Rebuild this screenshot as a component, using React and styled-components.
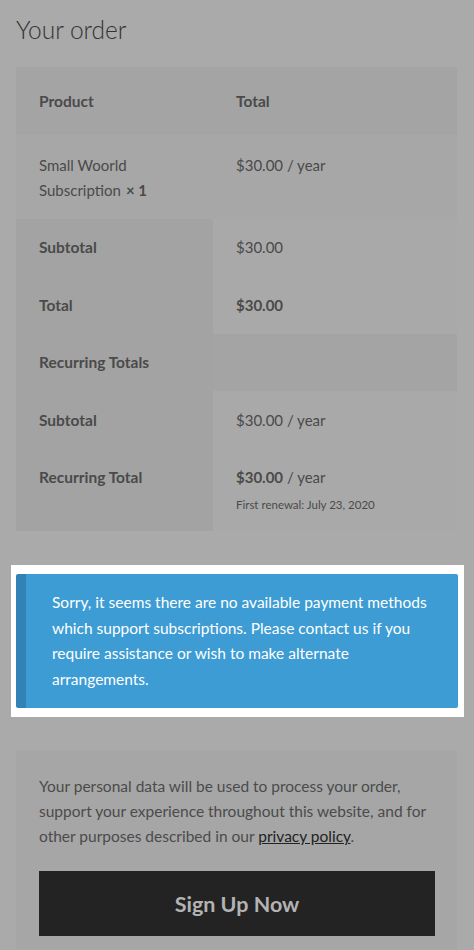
import React from 'react'
import styled, { createGlobalStyle } from 'styled-components'

const GlobalStyle = createGlobalStyle`
  body {
    margin: 0;
    background: #aaaaaa;
    font-family: 'Lato', 'Open Sans', sans-serif;
  }
`;

const Page = styled.div`
  padding: 0 17px 0 16px;
`;

const Title = styled.h3`
  margin: 0;
  padding-top: 15px;
  font-size: 24.5px;
  font-weight: 300;
  line-height: 30px;
  color: #333;
`;

const OrderTable = styled.table`
  width: 100%;
  margin-top: 22px;
  border-collapse: collapse;
  border-spacing: 0;
  font-size: 15px;
  line-height: 25px;
  color: #4a4a4a;
`;

const HeadCell = styled.th`
  text-align: left;
  font-weight: 700;
  font-size: 15.5px;
  padding: 21.5px 23px;
  background: #a4a4a4;
  width: ${p => (p.$narrow ? '151px' : 'auto')};
`;

const ItemRow = styled.tr`
  background: #a7a7a7;
`;

const ItemCell = styled.td`
  padding: 17.5px 23px 16px;
  vertical-align: top;
`;

const Qty = styled.strong`
  font-weight: 700;
  margin-left: 5px;
`;

const LabelCell = styled.th`
  text-align: left;
  font-weight: 700;
  font-size: 15.5px;
  padding: 16.5px 23px 16px;
  background: #a3a3a3;
  vertical-align: top;
`;

const ValueCell = styled.td`
  padding: 16.5px 23px 16px;
  background: ${p => (p.$shade ? '#a4a4a4' : '#a9a9a9')};
  vertical-align: top;
  font-weight: ${p => (p.$bold ? 700 : 400)};
`;

const Renewal = styled.small`
  display: block;
  font-size: 11.5px;
  line-height: 21px;
  margin-top: 4px;
`;

const Highlight = styled.div`
  margin: 34px -7px 0 -5px;
  padding: 9px 6px 9px 5px;
  background: #ffffff;
`;

const Notice = styled.div`
  background: #3d9cd3;
  border-left: 10px solid #3282b6;
  border-radius: 2px;
  padding: 16px 16px 16px 26px;
  color: #ffffff;
  font-size: 15.5px;
  line-height: 25.5px;
`;

const PrivacyBox = styled.div`
  margin-top: 33px;
  background: #a6a6a6;
  padding: 24px 22px 13px 23px;
`;

const PrivacyText = styled.p`
  margin: 0 0 22px;
  font-size: 15.5px;
  line-height: 25px;
  color: #4b4b4b;
`;

const PolicyLink = styled.a`
  color: #222;
  text-decoration: underline;
`;

const SignUpButton = styled.button`
  display: block;
  width: 100%;
  height: 65px;
  border: none;
  background: #232323;
  color: #b3b3b3;
  font-family: 'Lato', 'Open Sans', sans-serif;
  font-size: 21.5px;
  font-weight: 700;
`;

export default function App() {
  return (
    <Page>
      <GlobalStyle />
      <Title>Your order</Title>
      <OrderTable>
        <thead>
          <tr>
            <HeadCell $narrow>Product</HeadCell>
            <HeadCell>Total</HeadCell>
          </tr>
        </thead>
        <tbody>
          <ItemRow>
            <ItemCell>
              Small Woorld Subscription<Qty>× 1</Qty>
            </ItemCell>
            <ItemCell>$30.00 / year</ItemCell>
          </ItemRow>
        </tbody>
        <tfoot>
          <tr>
            <LabelCell>Subtotal</LabelCell>
            <ValueCell>$30.00</ValueCell>
          </tr>
          <tr>
            <LabelCell>Total</LabelCell>
            <ValueCell $bold>$30.00</ValueCell>
          </tr>
          <tr>
            <LabelCell>Recurring Totals</LabelCell>
            <ValueCell $shade />
          </tr>
          <tr>
            <LabelCell>Subtotal</LabelCell>
            <ValueCell>$30.00 / year</ValueCell>
          </tr>
          <tr>
            <LabelCell>Recurring Total</LabelCell>
            <ValueCell>
              <strong>$30.00</strong> / year
              <Renewal>First renewal: July 23, 2020</Renewal>
            </ValueCell>
          </tr>
        </tfoot>
      </OrderTable>
      <Highlight>
        <Notice>
          Sorry, it seems there are no available payment methods which support
          subscriptions. Please contact us if you require assistance or wish to
          make alternate arrangements.
        </Notice>
      </Highlight>
      <PrivacyBox>
        <PrivacyText>
          Your personal data will be used to process your order, support your
          experience throughout this website, and for other purposes described in
          our <PolicyLink href="#">privacy policy</PolicyLink>.
        </PrivacyText>
        <SignUpButton>Sign Up Now</SignUpButton>
      </PrivacyBox>
    </Page>
  )
}
